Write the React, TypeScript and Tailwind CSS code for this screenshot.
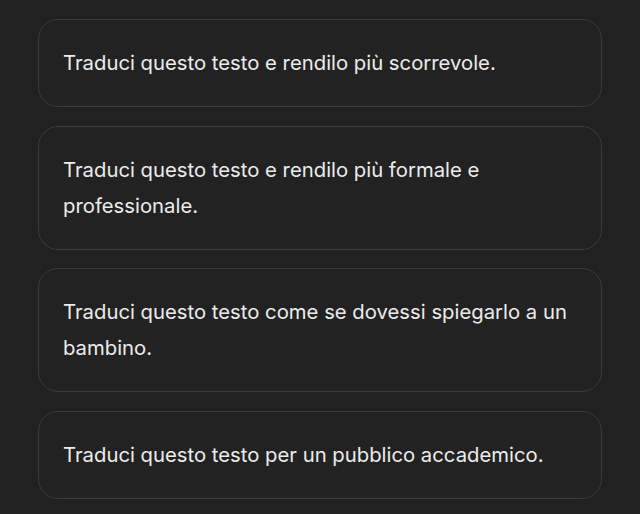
const prompts = [
  "Traduci questo testo e rendilo più scorrevole.",
  "Traduci questo testo e rendilo più formale e professionale.",
  "Traduci questo testo come se dovessi spiegarlo a un bambino.",
  "Traduci questo testo per un pubblico accademico.",
];

export default function App() {
  return (
    <div
      className="min-h-[514px] bg-[#212121] px-[38px] pt-[19px] pb-4"
      style={{ fontFamily: "Inter, 'Noto Sans', sans-serif" }}
    >
      <div className="flex w-[564px] flex-col gap-[18.7px]">
        {prompts.map((p) => (
          <div
            key={p}
            className="rounded-[20px] border border-[#3b3b3b] bg-[#222222] px-[24px] py-[25px] text-[20.3px] leading-[36px] text-[#ececec]"
          >
            {p}
          </div>
        ))}
      </div>
    </div>
  );
}
